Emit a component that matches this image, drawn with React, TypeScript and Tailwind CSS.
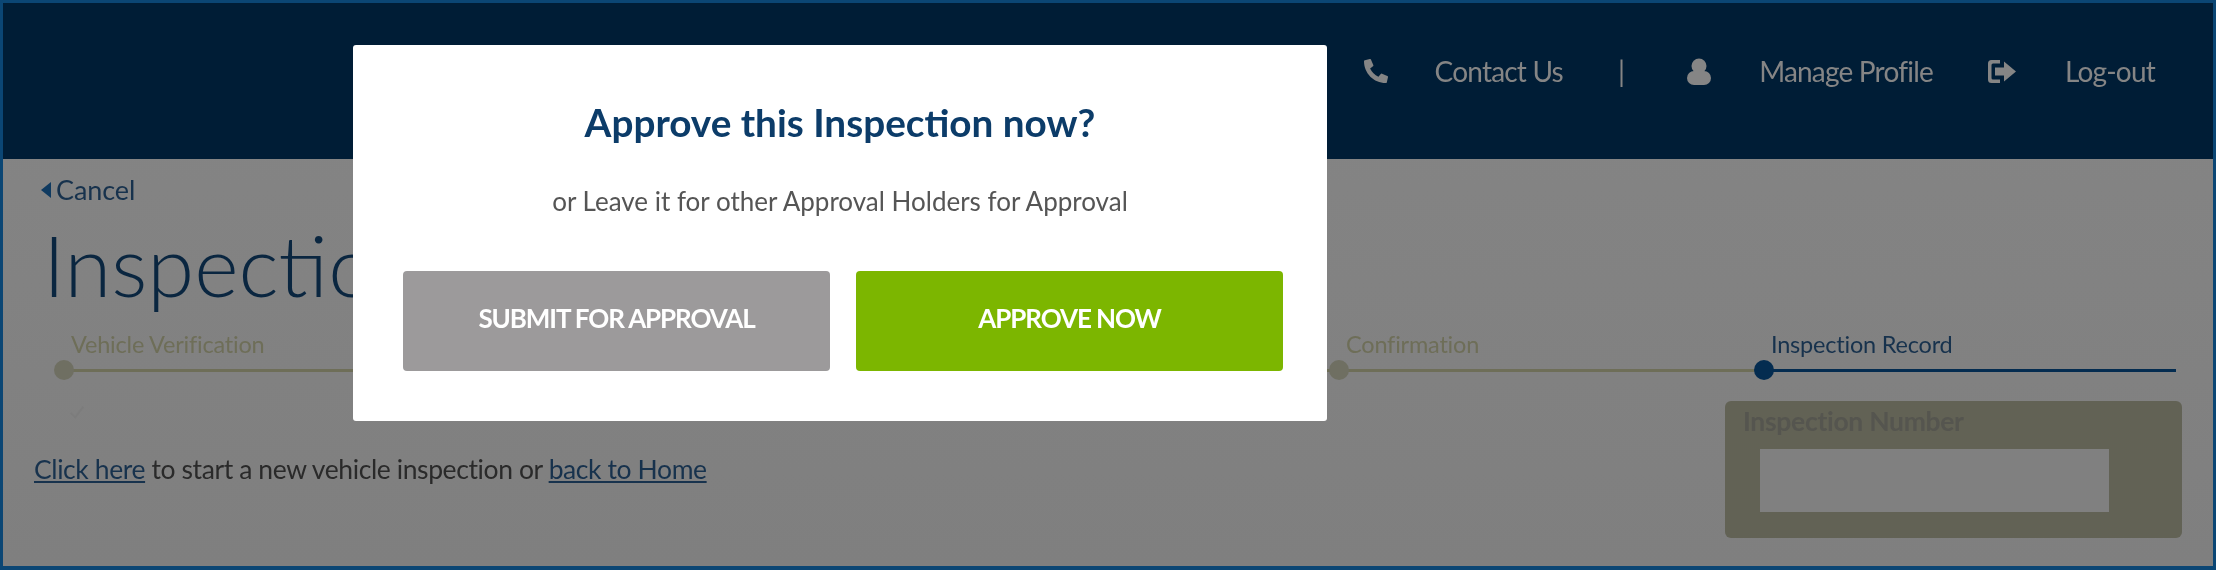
import { FaPhoneAlt } from "react-icons/fa";

const lato = "font-['Lato','Liberation_Sans',sans-serif]";

function Step({ label, active, last }: { label?: string; active?: boolean; last?: boolean }) {
  return (
    <div className={last ? "w-[412px] shrink-0" : "w-[425px] shrink-0"}>
      <div className={`h-[30px] pl-[7px] text-[23.5px] leading-[30px] whitespace-nowrap tracking-[-0.2px] ${active ? "text-[#17324d]" : "text-[#6e6e58]"}`}>
        {label ?? "\u00a0"}
      </div>
      <div className="relative mt-[10px] h-[3px] ml-[-1px]">
        <div className={`h-full ${active ? "bg-[#042c50]" : "bg-[#6e6e58]"}`} />
        <div className={`absolute left-[-9px] top-[-9px] size-[20px] rounded-full ${active ? "bg-[#042c50]" : "bg-[#6f6f62]"}`} />
      </div>
    </div>
  );
}

export default function App() {
  return (
    <div className={`relative flex h-[570px] w-[2216px] flex-col overflow-hidden border-x-[3px] border-t-[3px] border-b-[4px] border-[#0b4674] bg-gradient-to-b from-[#858585] to-[#7f7f7f] blur-[0.4px] ${lato}`}>
      <header className="flex h-[156px] shrink-0 items-start justify-end bg-[#001d36] pr-[58px] pt-[48px] text-[28px] leading-[40px] tracking-[-0.8px] text-[#858585]">
        <FaPhoneAlt className="mt-[8px] size-[24px]" />
        <span className="ml-[47px]">Contact Us</span>
        <span className="ml-[55px]">|</span>
        <svg viewBox="0 0 24 27" className="ml-[63px] mt-[7px] h-[27px] w-[24px] fill-[#858585]">
          <circle cx="12" cy="8" r="7.5" />
          <rect x="0" y="13" width="24" height="14" rx="7" />
        </svg>
        <span className="ml-[48px]">Manage Profile</span>
        <svg viewBox="0 0 28 23" className="ml-[55px] mt-[9px] h-[23px] w-[28px] fill-[#858585]">
          <path d="M0 3.5A3.5 3.5 0 0 1 3.5 0H12v3.5H5a1.5 1.5 0 0 0-1.500 1.500v13A1.500 1.500 0 0 0 5 19.500h7V23H3.500A3.500 3.500 0 0 1 0 19.500z" />
          <path d="M7 7.500h9V1.500L28 11.500 16 21.500v-6H7z" />
        </svg>
        <span className="ml-[49px]">Log-out</span>
      </header>

      <main className="flex flex-1 flex-col pl-[31px]">
        <div className="mt-[13px] flex h-[36px] items-center pl-[7px] text-[27px] tracking-[-0.1px] text-[#17324d]">
          <span className="mr-[5px] h-0 w-0 border-y-[8px] border-r-[10px] border-y-transparent border-r-[#0f3a60]" />
          Cancel
        </div>
        <h1 className="mt-[6px] w-[320px] overflow-hidden pl-[9px] text-[85px] leading-[100px] font-light text-[#0a2640] whitespace-nowrap">
          Inspection Record
        </h1>
        <div className="mt-[15px] flex pl-[30px]">
          <Step label="Vehicle Verification" />
          <Step />
          <Step />
          <Step label="Confirmation" />
          <Step label="Inspection Record" active last />
        </div>
        <div className="relative flex-1">
          <svg viewBox="0 0 20 20" className="absolute left-[34px] top-[31px] size-[18px] fill-none stroke-[#7c7c7c] stroke-[2]">
            <path d="M3 11l5 5 9-12" />
          </svg>
          <p className="absolute left-0 top-[79px] whitespace-nowrap text-[26.5px] leading-[36px] tracking-[-0.4px] text-[#2a2a2a]">
            <a className="text-[#17324d] underline">Click here</a> to start a new vehicle inspection or{" "}
            <a className="text-[#17324d] underline">back to Home</a>
          </p>
          <div className="absolute left-[1691px] top-[29px] h-[137px] w-[457px] rounded-[6px] bg-[#626255] pl-[18px] pt-[3px]">
            <div className="text-[26.5px] leading-[34px] font-bold tracking-[-0.3px] text-[#55554f]">Inspection Number</div>
            <div className="ml-[17px] mt-[11px] h-[63px] w-[349px] bg-[#808080]" />
          </div>
        </div>
      </main>

      <div className="absolute left-[350px] top-[42px] flex h-[376px] w-[974px] flex-col items-center rounded-[3px] bg-white">
        <h2 className="mt-[55px] text-[38.7px] leading-[44px] font-bold text-[#0c3c69]">Approve this Inspection now?</h2>
        <p className="mt-[41px] text-[26px] leading-[32px] text-[#555555]">or Leave it for other Approval Holders for Approval</p>
        <div className="ml-[6px] mt-[54px] flex gap-[26px]">
          <button className="h-[100px] w-[427px] rounded-[4px] bg-[#9c9a9b] pb-[5px] text-[26px] font-bold tracking-[-1.1px] text-white">SUBMIT FOR APPROVAL</button>
          <button className="h-[100px] w-[427px] rounded-[4px] bg-[#7cb600] pb-[5px] text-[26px] font-bold tracking-[-1.1px] text-white">APPROVE NOW</button>
        </div>
      </div>
    </div>
  );
}
